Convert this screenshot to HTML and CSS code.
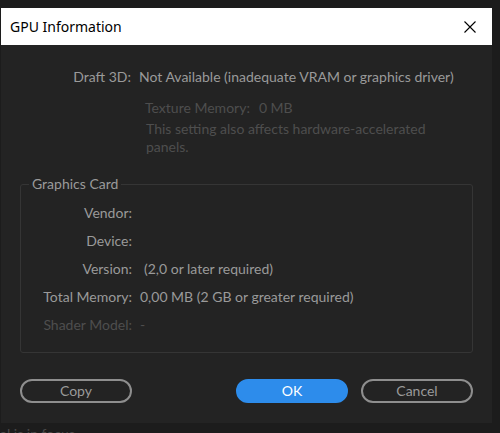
FILE: index.html
```html
<!DOCTYPE html>
<html>
<head>
<meta charset="utf-8">
<link rel="stylesheet" href="styles.css">
</head>
<body>
<div class="dialog">
  <div class="titlebar">
    <span class="title">GPU Information</span>
    <svg class="close" width="12" height="12" viewBox="0 0 12 12"><path d="M0.5 0.5 L11.5 11.5 M11.5 0.5 L0.5 11.5" stroke="#000" stroke-width="1.1" fill="none"/></svg>
  </div>
  <div class="content">
    <div class="row top">
      <span class="label">Draft 3D:</span>
      <span class="value">Not Available (inadequate VRAM or graphics driver)</span>
    </div>
    <div class="sub disabled">
      <div class="tex"><span>Texture Memory:</span><span class="texval">0 MB</span></div>
      <p class="note">This setting also affects hardware-accelerated panels.</p>
    </div>
    <fieldset class="group">
      <legend>Graphics Card</legend>
      <div class="grid">
        <span class="label">Vendor:</span><span class="value"></span>
        <span class="label">Device:</span><span class="value"></span>
        <span class="label">Version:</span><span class="value ver">(2,0 or later required)</span>
        <span class="label">Total Memory:</span><span class="value">0,00 MB (2 GB or greater required)</span>
        <span class="label disabled">Shader Model:</span><span class="value disabled">-</span>
      </div>
    </fieldset>
    <div class="buttons">
      <button class="btn">Copy</button>
      <span class="spacer"></span>
      <button class="btn primary">OK</button>
      <button class="btn">Cancel</button>
    </div>
  </div>
</div>
<div class="behind">al is in focus</div>
</body>
</html>
```
FILE: styles.css
```css
html, body {
  margin: 0;
  padding: 0;
  background: #1c1c1c;
  width: 500px;
  height: 433px;
  overflow: hidden;
  font-family: "Lato", "Noto Sans", sans-serif;
}
.dialog {
  margin: 8px 0 0 1px;
  width: 491px;
  height: 415px;
  background: #232323;
  display: flex;
  flex-direction: column;
}
.titlebar {
  height: 37px;
  background: #ffffff;
  display: flex;
  align-items: center;
  justify-content: space-between;
  padding: 0 16px 0 9px;
}
.title {
  font-family: "Noto Sans", sans-serif;
  font-size: 14px;
  color: #000;
}
.close {
  display: block;
}
.content {
  padding: 23px 19px 0 19px;
  display: flex;
  flex-direction: column;
  font-size: 14px;
  line-height: 18px;
  color: #9a9a9a;
}
.row.top {
  display: flex;
  gap: 8px;
}
.row.top .label {
  width: 111px;
  text-align: right;
}
.disabled {
  color: #4e4e4e;
}
.sub {
  margin: 13px 0 0 125px;
}
.tex {
  display: flex;
  gap: 9px;
}
.note {
  margin: 3px 0 0 1px;
  width: 300px;
}
.group {
  margin: 19px 0 0 0;
  padding: 11px 0 17px 0;
  border: 1px solid #353535;
  border-radius: 3px;
  height: 178px;
  box-sizing: border-box;
}
.group legend {
  margin-left: 8px;
  padding: 0 3px;
  color: #9a9a9a;
}
.grid {
  display: grid;
  grid-template-columns: 111px 1fr;
  column-gap: 8px;
  row-gap: 10px;
}
.grid .label {
  text-align: right;
  height: 18px;
}
.grid .ver {
  padding-left: 4px;
}
.buttons {
  margin-top: 26px;
  display: flex;
  gap: 13px;
}
.spacer {
  flex: 1;
}
.btn {
  width: 112px;
  height: 24px;
  border: 2px solid #8e8e8e;
  border-radius: 12px;
  background: transparent;
  color: #9a9a9a;
  font-family: "Lato", "Noto Sans", sans-serif;
  font-size: 14px;
  padding: 0;
  line-height: 18px;
}
.btn.primary {
  background: #2d8ceb;
  border-color: #2d8ceb;
  color: #ffffff;
}
.behind {
  font-family: "Lato", sans-serif;
  font-size: 14px;
  color: #4a4a4a;
  margin-top: 3px;
  padding-left: 0;
  line-height: 16px;
}
```
